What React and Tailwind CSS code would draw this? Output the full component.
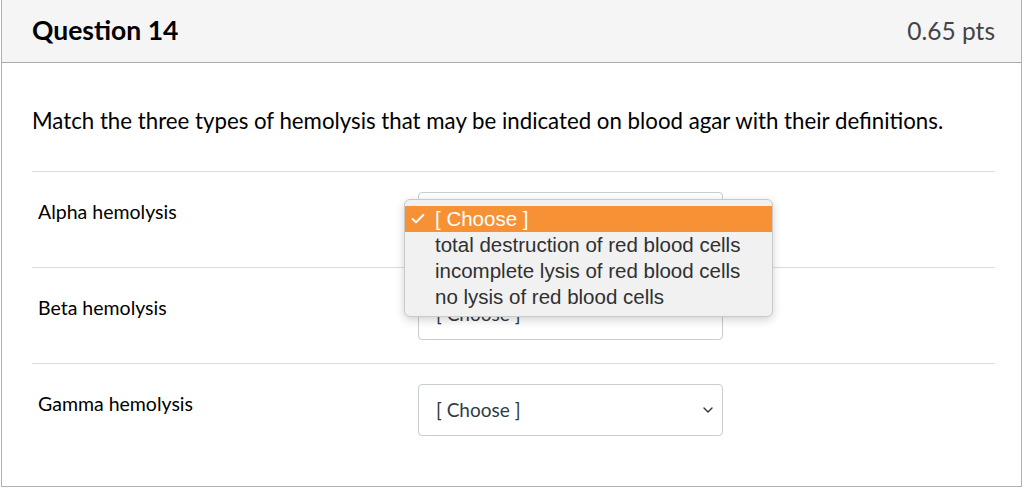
import React from 'react';
import { ChevronDown, Check } from 'lucide-react';

const rows = ['Alpha hemolysis', 'Beta hemolysis', 'Gamma hemolysis'];
const options = [
  'total destruction of red blood cells',
  'incomplete lysis of red blood cells',
  'no lysis of red blood cells',
];

const SelectBox = () => (
  <div className="flex h-[52px] w-[305px] items-center justify-between rounded-[4px] border border-[#c7cdd1] bg-white pl-[17px] pr-[6px] text-[19px] text-[#2d3b45]">
    <span>[ Choose ]</span>
    <ChevronDown className="h-4 w-4 text-[#333]" strokeWidth={2} />
  </div>
);

const App = () => {
  return (
    <div className="h-[488px] w-[1024px] overflow-hidden bg-white font-['Lato',sans-serif]">
      <div className="relative ml-[1px] h-[487px] w-[1021px] border-x border-b border-[#b1b1b1]">
        {/* Header */}
        <div className="flex h-[63px] items-center justify-between border-b border-[#aaaaaa] bg-[#f5f5f5] pl-[30px] pr-[26px]">
          <h2 className="text-[26.5px] font-bold text-black">Question 14</h2>
          <span className="text-[24.5px] text-[#444]">0.65 pts</span>
        </div>

        {/* Body */}
        <div className="pl-[30px] pr-[26px]">
          <p className="pt-[41px] pb-[34px] text-[22.25px] leading-[33px] text-black">
            Match the three types of hemolysis that may be indicated on blood agar with their definitions.
          </p>
          {rows.map((label) => (
            <div key={label} className="flex border-t border-[#dcdcdc] pt-[20px] pb-[23px]">
              <div className="w-[386px] pl-[6px] pt-[5px] text-[19.5px] text-black">{label}</div>
              <SelectBox />
            </div>
          ))}
        </div>

        {/* Open dropdown menu */}
        <div className="absolute left-[402px] top-[199px] w-[369px] rounded-[6px] border border-[#c9c9c9] bg-[#f1f1f1] py-[6px] font-['Liberation_Sans',sans-serif] text-[20.5px] text-[#303030] shadow-[0_3px_10px_rgba(0,0,0,0.18)]">
          <div className="flex h-[26px] items-center bg-[#f69235] text-white">
            <Check className="ml-[5px] mr-[9px] h-[16px] w-[16px]" strokeWidth={3} />
            <span>[ Choose ]</span>
          </div>
          {options.map((o) => (
            <div key={o} className="flex h-[26px] items-center pl-[30px]">{o}</div>
          ))}
        </div>
      </div>
    </div>
  );
};

export default App;
